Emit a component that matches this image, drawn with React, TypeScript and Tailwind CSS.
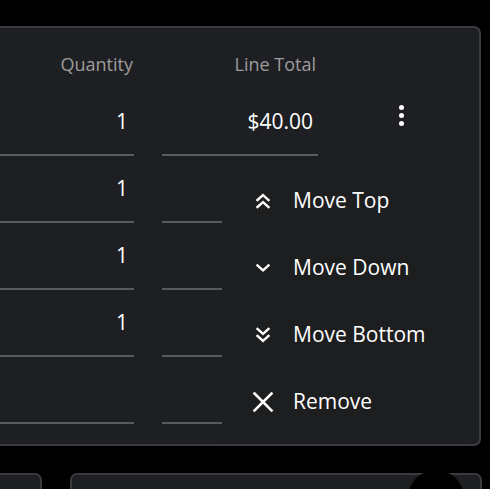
import React from "react";

const font = { fontFamily: '"Open Sans", "Noto Sans", sans-serif' };

function ChevronsUpIcon() {
  return (
    <svg width="18" height="18" viewBox="0 0 18 18" fill="none" stroke="white" strokeWidth="2.4" strokeLinecap="square">
      <polyline points="3.5,8 9,3 14.5,8" />
      <polyline points="3.5,15 9,10 14.5,15" />
    </svg>
  );
}
function ChevronDownIcon() {
  return (
    <svg width="18" height="18" viewBox="0 0 18 18" fill="none" stroke="white" strokeWidth="2.4" strokeLinecap="square">
      <polyline points="3.5,6.5 9,11.5 14.5,6.5" />
    </svg>
  );
}
function ChevronsDownIcon() {
  return (
    <svg width="18" height="18" viewBox="0 0 18 18" fill="none" stroke="white" strokeWidth="2.4" strokeLinecap="square">
      <polyline points="3.5,3 9,8 14.5,3" />
      <polyline points="3.5,10 9,15 14.5,10" />
    </svg>
  );
}
function XIcon() {
  return (
    <svg width="22" height="22" viewBox="0 0 22 22" fill="none" stroke="white" strokeWidth="2.6" strokeLinecap="square">
      <line x1="2.5" y1="2.5" x2="19.5" y2="19.5" />
      <line x1="19.5" y1="2.5" x2="2.5" y2="19.5" />
    </svg>
  );
}

function Row({ qty, total }: { qty?: string; total?: string }) {
  return (
    <div className="flex h-[67px]">
      <div className="w-[152px] h-full border-b-2 border-[#5a5b5e] flex items-center justify-end pr-[6px] text-white text-[21px]">
        {qty}
      </div>
      <div className="w-[28px]" />
      <div className="w-[156px] h-full border-b-2 border-[#5a5b5e] flex items-center justify-end pr-[5px] text-white text-[21px]">
        {total}
      </div>
    </div>
  );
}

export default function App() {
  const items = [
    { icon: <ChevronsUpIcon />, label: "Move Top" },
    { icon: <ChevronDownIcon />, label: "Move Down" },
    { icon: <ChevronsDownIcon />, label: "Move Bottom" },
    { icon: <XIcon />, label: "Remove" },
  ];
  return (
    <div className="w-[490px] h-[489px] bg-black overflow-hidden relative" style={font}>
      <div className="pt-[26px]">
        <div className="relative ml-[-20px] w-[501px] h-[420px] bg-[#1e1f22] border-2 border-[#3a3b3e] rounded-[7px]">
          <div className="flex h-[61px] items-center pt-[12px] text-[#9c9c9e] text-[18px]">
            <div className="w-[151px] text-right">Quantity</div>
            <div className="w-[29px]" />
            <div className="w-[156px] text-right pr-[2px]">Line Total</div>
          </div>
          <div className="flex">
            <div>
              <Row qty="1" total="$40.00" />
              <Row qty="1" />
              <Row qty="1" />
              <Row qty="1" />
              <Row />
            </div>
            <div className="flex-1 flex justify-center pt-[16px] pl-[6px]">
              <div className="flex flex-col items-center gap-[3px] h-[22px]">
                <div className="w-[5px] h-[5px] rounded-full bg-white" />
                <div className="w-[5px] h-[5px] rounded-full bg-white" />
                <div className="w-[5px] h-[5px] rounded-full bg-white" />
              </div>
            </div>
          </div>
          <div className="absolute left-[240px] top-[128px] w-[237px] h-[288px] bg-[#1d1e20] pt-[11px]">
            {items.map((it) => (
              <div key={it.label} className="flex items-center h-[67px] text-white text-[21px]">
                <div className="w-[71px] pl-[10px] flex justify-center">{it.icon}</div>
                <span>{it.label}</span>
              </div>
            ))}
          </div>
        </div>
      </div>
      <div className="flex mt-[27px] gap-[28px]">
        <div className="ml-[-20px] w-[62px] h-[40px] bg-[#1e1f22] border-2 border-[#3a3b3e] rounded-[7px]" />
        <div className="w-[412px] h-[40px] bg-[#1e1f22] border-2 border-[#3a3b3e] rounded-[7px]" />
      </div>
      <div className="absolute left-[408px] top-[470px] w-[56px] h-[56px] rounded-full bg-black" />
    </div>
  );
}
